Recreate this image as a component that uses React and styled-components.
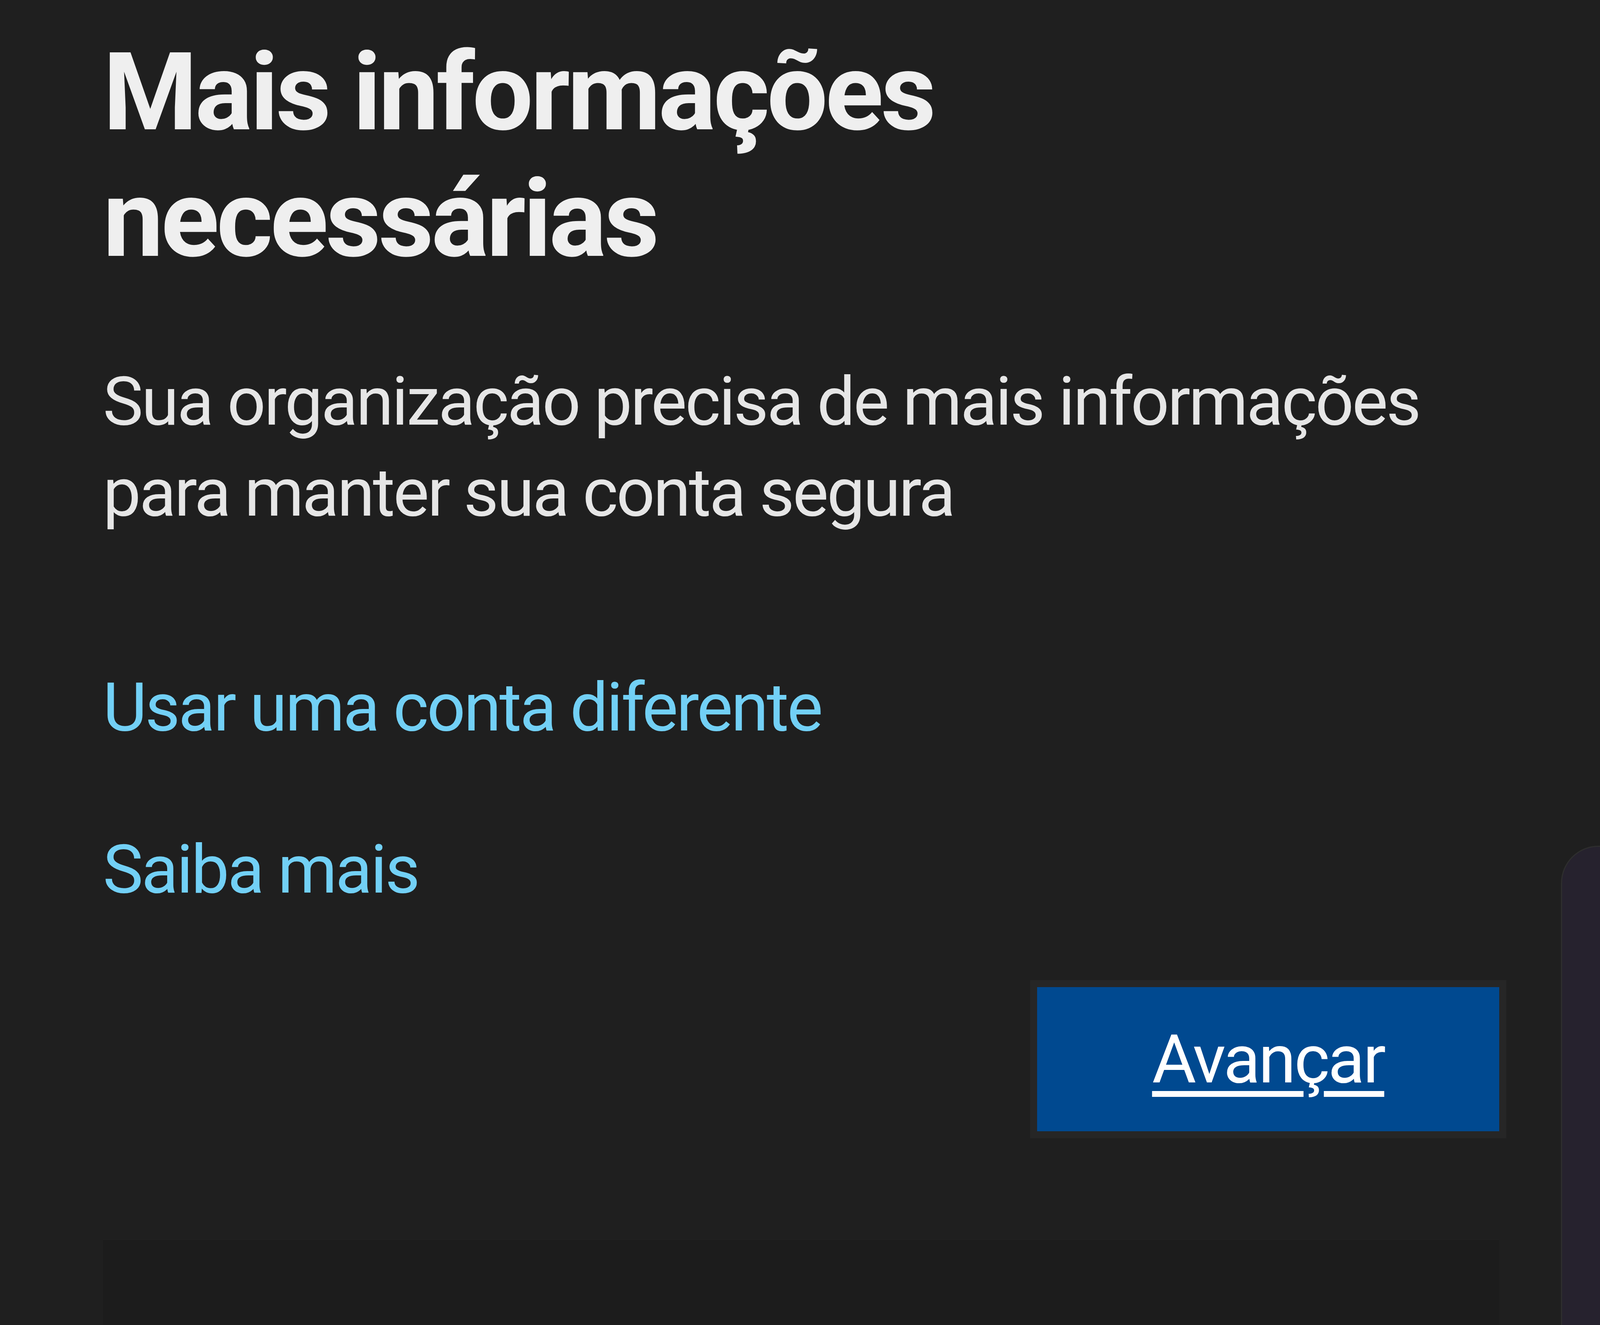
import React from 'react'
import styled, { createGlobalStyle } from 'styled-components'

// horizontal sizes are taken from a 4320 wide frame
const vx = px => `${(px / 43.2).toFixed(4)}vw`

const GlobalStyle = createGlobalStyle`
  html, body {
    margin: 0;
    padding: 0;
    background: #1f1f1f;
  }
  body {
    font-family: Roboto, "Noto Sans", "Liberation Sans", sans-serif;
    overflow: hidden;
  }
`

const Screen = styled.div`
  position: relative;
  width: 100vw;
  height: 100vh;
  background: #1f1f1f;
  overflow: hidden;
`

const Column = styled.main`
  display: flex;
  flex-direction: column;
  width: ${vx(3770)};
  margin-left: ${vx(278)};
  padding-top: 75px;
`

const Title = styled.h1`
  margin: 0;
  font-size: 277px;
  font-weight: 700;
  line-height: 324px;
  letter-spacing: -0.026em;
  color: #efefef;
  width: 2600px;
`

const Description = styled.p`
  margin: 188px 0 0;
  font-size: 173.5px;
  line-height: 233px;
  letter-spacing: -0.026em;
  color: #e6e6e6;
  width: 3600px;
`

const TextLink = styled.a`
  display: block;
  margin-top: ${p => p.$gap}px;
  font-size: 173.5px;
  line-height: 204px;
  letter-spacing: -0.026em;
  color: #72d0f6;
  text-decoration: none;
  white-space: nowrap;
  cursor: pointer;
`

const Actions = styled.div`
  display: flex;
  justify-content: flex-end;
  margin-top: 199px;
`

const PrimaryButton = styled.button`
  width: ${vx(1248)};
  height: 369px;
  border: none;
  background: #004990;
  box-shadow: 0 0 0 18px #262626;
  color: #ffffff;
  font-family: Roboto, "Noto Sans", "Liberation Sans", sans-serif;
  font-size: 173.5px;
  letter-spacing: -0.026em;
  text-decoration: underline;
  text-decoration-thickness: 15px;
  text-underline-offset: 22px;
  cursor: pointer;
`

const Footer = styled.div`
  height: 217px;
  margin-top: 276px;
  background: #1c1c1c;
  border-top: 2px solid #212121;
`

const SidePeek = styled.div`
  position: absolute;
  top: 2165px;
  right: 0;
  bottom: 0;
  width: ${vx(102)};
  background: #26222e;
  border-top: 3px solid #2e2e2e;
  border-left: 3px solid #2e2e2e;
  border-top-left-radius: 96px;
`

export default function App() {
  return (
    <Screen>
      <GlobalStyle />
      <Column>
        <Title>Mais informações necessárias</Title>
        <Description>
          Sua organização precisa de mais informações para manter sua conta segura
        </Description>
        <TextLink $gap={332}>Usar uma conta diferente</TextLink>
        <TextLink $gap={211}>Saiba mais</TextLink>
        <Actions>
          <PrimaryButton>Avançar</PrimaryButton>
        </Actions>
        <Footer />
      </Column>
      <SidePeek />
    </Screen>
  )
}
